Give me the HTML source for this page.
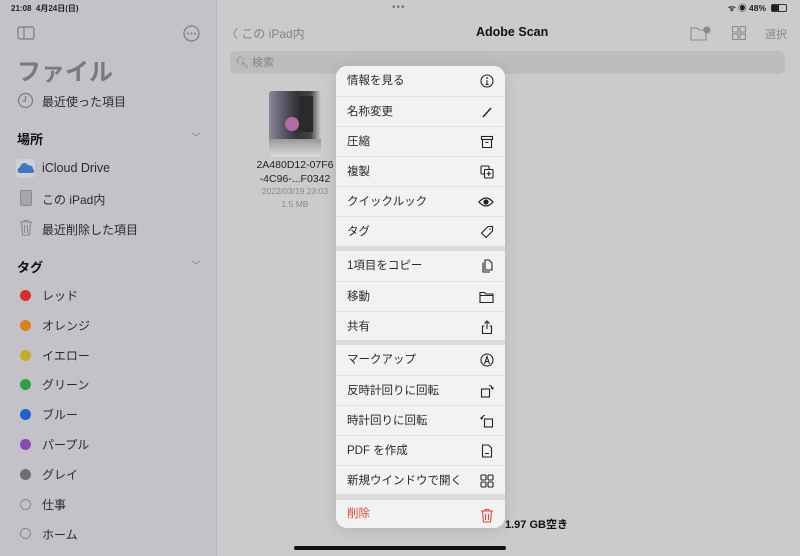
<!DOCTYPE html>
<html><head><meta charset="utf-8"><style>
*{margin:0;padding:0;box-sizing:border-box}
body{width:800px;height:556px;overflow:hidden;position:relative;background:#cbcbcb;font-family:"Liberation Sans","Noto Sans CJK JP",sans-serif;color:#1c1c1c}
.a{position:absolute;white-space:nowrap}
#side{position:absolute;left:0;top:0;width:217px;height:556px;background:#c4c1c8;border-right:1px solid #b7b4ba}
.si{font-size:12px;color:#2a2a2e}
.dot{position:absolute;left:20px;width:11px;height:11px;border-radius:50%}
#menu{position:absolute;left:336px;top:66px;width:169px;height:462px;background:#dcdcdc;border-radius:11px;overflow:hidden;box-shadow:0 2px 14px rgba(0,0,0,.12)}
.r{position:absolute;left:0;width:169px;height:29px;background:#f2f2f2;font-size:11.5px;color:#2a2a2a;padding-left:11px;padding-top:15px;line-height:0}
.r svg{position:absolute;right:11px;top:8px}
</style></head><body>
<div id="side">
<div class="a" style="left:11px;top:3px;font-size:8px;font-weight:bold;color:#222">21:08&nbsp;&nbsp;4月24日(日)</div>
<svg class="a" style="left:17px;top:26px" width="18" height="14"><rect x="1" y="1" width="16" height="12" rx="2" fill="none" stroke="#7d7b80" stroke-width="1.2"/><line x1="7" y1="1" x2="7" y2="13" stroke="#7d7b80" stroke-width="1.2"/></svg>
<svg class="a" style="left:183px;top:25px" width="17" height="17"><circle cx="8.5" cy="8.5" r="7.5" fill="none" stroke="#7d7b80" stroke-width="1.2"/><circle cx="5" cy="8.5" r="1" fill="#7d7b80"/><circle cx="8.5" cy="8.5" r="1" fill="#7d7b80"/><circle cx="12" cy="8.5" r="1" fill="#7d7b80"/></svg>
<div class="a" style="left:17px;top:52px;font-size:24px;font-weight:bold;color:#7b797e">ファイル</div>
<svg class="a" style="left:17px;top:92px" width="17" height="17"><circle cx="8.5" cy="8.5" r="7" fill="none" stroke="#7d7b80" stroke-width="1.2"/><path d="M8.5 4v5h-3" fill="none" stroke="#7d7b80" stroke-width="1.2"/></svg>
<div class="a si" style="left:42px;top:93px">最近使った項目</div>
<div class="a" style="left:17px;top:129px;font-size:13px;font-weight:bold;color:#111">場所</div>
<div class="a" style="left:191px;top:129px;font-size:10px;color:#7d7b80">﹀</div>
<div class="a" style="left:16px;top:159px;width:19px;height:19px;background:#d2d0d4;border-radius:4px"></div>
<svg class="a" style="left:17px;top:162px" width="18" height="12"><path d="M2 11a3 3 0 0 1 1-5.5 4.5 4.5 0 0 1 8.5-2 3.5 3.5 0 0 1 4.5 3.5 2.2 2.2 0 0 1 0 4z" fill="#3f79c4"/></svg>
<div class="a si" style="left:42px;top:161px;font-size:12.5px">iCloud Drive</div>
<div class="a" style="left:20px;top:190px;width:12px;height:16px;border:1.5px solid #8a888d;border-radius:2px;background:#a9a7ac"></div>
<div class="a si" style="left:42px;top:191px">この iPad内</div>
<svg class="a" style="left:19px;top:219px" width="14" height="17"><path d="M1 3h12M5 3V1.5h4V3M2.5 3l1 13h7l1-13M5.5 6v8M8.5 6v8" fill="none" stroke="#8a888d" stroke-width="1.1"/></svg>
<div class="a si" style="left:42px;top:221px">最近削除した項目</div>
<div class="a" style="left:17px;top:257px;font-size:13px;font-weight:bold;color:#111">タグ</div>
<div class="a" style="left:191px;top:257px;font-size:10px;color:#7d7b80">﹀</div>
<div class="dot" style="top:290px;background:#d6302c"></div><div class="a si" style="left:42px;top:287px">レッド</div>
<div class="dot" style="top:320px;background:#d98313"></div><div class="a si" style="left:42px;top:317px">オレンジ</div>
<div class="dot" style="top:350px;background:#c9aa26"></div><div class="a si" style="left:42px;top:347px">イエロー</div>
<div class="dot" style="top:379px;background:#2fa047"></div><div class="a si" style="left:42px;top:376px">グリーン</div>
<div class="dot" style="top:409px;background:#1c63c9"></div><div class="a si" style="left:42px;top:406px">ブルー</div>
<div class="dot" style="top:439px;background:#8a4ab0"></div><div class="a si" style="left:42px;top:436px">パープル</div>
<div class="dot" style="top:469px;background:#707070"></div><div class="a si" style="left:42px;top:466px">グレイ</div>
<div class="dot" style="top:499px;border:1px solid #8a888d"></div><div class="a si" style="left:42px;top:496px">仕事</div>
<div class="dot" style="top:528px;border:1px solid #8a888d"></div><div class="a si" style="left:42px;top:526px">ホーム</div>
</div>
<div class="a" style="left:392px;top:2px;font-size:10px;color:#777;letter-spacing:1px">•••</div>
<div class="a" style="left:728px;top:2px;font-size:8.5px;font-weight:bold;color:#222">ᯤ ◉ 48%</div>
<div class="a" style="left:771px;top:4px;width:16px;height:8px;border:1px solid #333;border-radius:2px"><div style="width:7px;height:6px;background:#222"></div></div>
<div class="a" style="left:226px;top:25px;font-size:12px;color:#838386">〈 この iPad内</div>
<div class="a" style="left:476px;top:25px;font-size:12.5px;font-weight:bold;color:#111">Adobe Scan</div>
<svg class="a" style="left:690px;top:25px" width="22" height="16"><path d="M1 3h6l2 2h7v10H1z" fill="none" stroke="#8a8a8d" stroke-width="1.1"/><circle cx="17" cy="5" r="3.5" fill="#8a8a8d"/></svg>
<svg class="a" style="left:732px;top:26px" width="14" height="14" fill="none" stroke="#8a8a8d" stroke-width="1.1"><rect x=".5" y=".5" width="5.5" height="5.5"/><rect x="8" y=".5" width="5.5" height="5.5"/><rect x=".5" y="8" width="5.5" height="5.5"/><rect x="8" y="8" width="5.5" height="5.5"/></svg>
<div class="a" style="left:765px;top:26px;font-size:11px;color:#8a8a8d">選択</div>
<div class="a" style="left:230px;top:51px;width:555px;height:23px;background:#bdbdbd;border-radius:6px"></div>
<div class="a" style="left:235px;top:54px;font-size:11px;color:#838386">🔍︎ 検索</div>
<div class="a" style="left:269px;top:91px;width:52px;height:66px;border-radius:3px;overflow:hidden;background:linear-gradient(90deg,#889 0%,#556 30%,#333 55%,#444 80%,#ccc 100%)">
<div style="position:absolute;left:0;top:48px;width:52px;height:18px;background:linear-gradient(180deg,#999,#ddd)"></div>
<div style="position:absolute;left:16px;top:26px;width:14px;height:14px;border-radius:50%;background:#b56aa8"></div>
<div style="position:absolute;left:30px;top:5px;width:14px;height:36px;background:#2a2a2e"></div>
</div>
<div class="a" style="left:256px;top:158px;width:78px;text-align:center;font-size:10.5px;line-height:14px;color:#222">2A480D12-07F6<br>-4C96-...F0342</div>
<div class="a" style="left:256px;top:185px;width:78px;text-align:center;font-size:8.5px;line-height:13px;color:#888">2022/03/19 23:03<br>1.5 MB</div>
<div class="a" style="left:505px;top:516px;font-size:11px;font-weight:bold;color:#111">1.97 GB空き</div>
<div id="menu">
<div class="r" style="top:0;height:30px">情報を見る<svg width="14" height="14"><circle cx="7" cy="7" r="6" fill="none" stroke="#222" stroke-width="1.1"/><path d="M7 6v4.5M5.5 10.5h3" stroke="#222"/><circle cx="7" cy="4" r=".9" fill="#222"/></svg></div>
<div class="r" style="top:30px;height:30px;border-top:1px solid #e0e0e0">名称変更<svg width="14" height="14"><path d="M3 12L11 3" stroke="#222" stroke-width="1.4"/></svg></div>
<div class="r" style="top:60px;height:30px;border-top:1px solid #e0e0e0">圧縮<svg width="14" height="14" fill="none" stroke="#222" stroke-width="1.1"><rect x="1.5" y="1.5" width="11" height="3"/><path d="M2.5 4.5v8h9v-8M5.5 7.5h3"/></svg></div>
<div class="r" style="top:90px;height:30px;border-top:1px solid #e0e0e0">複製<svg width="14" height="14" fill="none" stroke="#222" stroke-width="1.1"><rect x="1" y="1" width="8" height="8" rx="1"/><rect x="4.5" y="4.5" width="8.5" height="8.5" rx="1" fill="#f2f2f2"/><path d="M8.75 6.5v4.5M6.5 8.75h4.5"/></svg></div>
<div class="r" style="top:120px;height:30px;border-top:1px solid #e0e0e0">クイックルック<svg width="16" height="14"><path d="M1 7q7-8 14 0q-7 8-14 0z" fill="none" stroke="#222" stroke-width="1.3"/><circle cx="8" cy="7" r="2.6" fill="#222"/></svg></div>
<div class="r" style="top:150px;height:30px;border-top:1px solid #e0e0e0">タグ<svg width="14" height="14"><path d="M8 1.5h4.5V6L6 12.5 1.5 8z" fill="none" stroke="#222" stroke-width="1.1"/><circle cx="10" cy="4" r=".8" fill="#222"/></svg></div>
<div class="r" style="top:185px;height:30px">1項目をコピー<svg width="14" height="14" fill="none" stroke="#222" stroke-width="1.1"><path d="M5 1h4l3 3v7H5z"/><path d="M3 3.5v9.5h7"/></svg></div>
<div class="r" style="top:215px;height:30px;border-top:1px solid #e0e0e0">移動<svg width="15" height="14" fill="none" stroke="#222" stroke-width="1.1"><path d="M1 2.5h4.5l1.5 1.5h7v8.5H1zM1 5.5h13"/></svg></div>
<div class="r" style="top:245px;height:29px;border-top:1px solid #e0e0e0">共有<svg width="14" height="15" fill="none" stroke="#222" stroke-width="1.1"><path d="M7 1v8M4.5 3.5L7 1l2.5 2.5M4.5 6H2.5v7.5h9V6h-2"/></svg></div>
<div class="r" style="top:279px;height:30px">マークアップ<svg width="14" height="14" fill="none" stroke="#222" stroke-width="1.1"><circle cx="7" cy="7" r="6"/><path d="M4.5 11L7 3.5 9.5 11M5.5 8.5h3"/></svg></div>
<div class="r" style="top:309px;height:30px;border-top:1px solid #e0e0e0">反時計回りに回転<svg width="14" height="14" fill="none" stroke="#222" stroke-width="1.1"><rect x="1.5" y="5" width="8" height="8"/><path d="M9 1.5q3 0 3.5 3.5M11 3.5l1.5 1.5 1-1.5"/></svg></div>
<div class="r" style="top:339px;height:30px;border-top:1px solid #e0e0e0">時計回りに回転<svg width="14" height="14" fill="none" stroke="#222" stroke-width="1.1"><rect x="4.5" y="5" width="8" height="8"/><path d="M5 1.5q-3 0-3.5 3.5M3 3.5L1.5 5 .5 3.5"/></svg></div>
<div class="r" style="top:369px;height:30px;border-top:1px solid #e0e0e0">PDF を作成<svg width="14" height="14" fill="none" stroke="#222" stroke-width="1.1"><path d="M2.5 1h6l3 3v9h-9z M5 9.5h4"/></svg></div>
<div class="r" style="top:399px;height:29px;border-top:1px solid #e0e0e0">新規ウインドウで開く<svg width="14" height="14" fill="none" stroke="#222" stroke-width="1.1"><rect x="1" y="1" width="5" height="5" rx="1"/><rect x="8" y="1" width="5" height="5" rx="1"/><rect x="1" y="8" width="5" height="5" rx="1"/><rect x="8" y="8" width="5" height="5" rx="1"/></svg></div>
<div class="r" style="top:434px;height:28px;color:#e0463c;padding-top:14px">削除<svg width="14" height="15" fill="none" stroke="#e0463c" stroke-width="1.1"><path d="M1 3h12M5 3V1.5h4V3M2.5 3l1 11h7l1-11M5.5 6v6M8.5 6v6"/></svg></div>
</div>
<div class="a" style="left:294px;top:546px;width:212px;height:4px;border-radius:2px;background:#111"></div>
</body></html>
